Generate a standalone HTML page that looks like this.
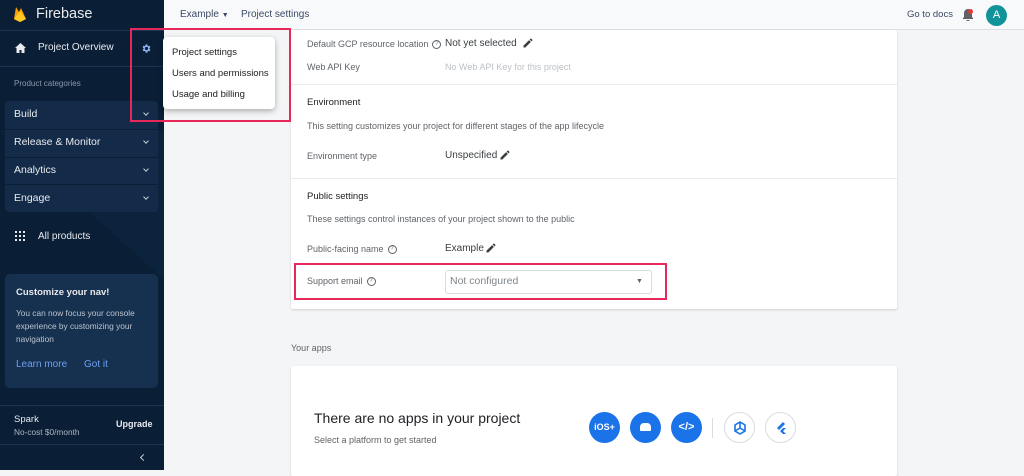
<!DOCTYPE html>
<html><head><meta charset="utf-8"><style>
*{box-sizing:border-box;margin:0;padding:0}
body{width:1024px;height:470px;overflow:hidden;background:#f4f5f6;font-family:"Liberation Sans",Roboto,sans-serif;position:relative;color:#3c4043}
.abs{position:absolute}
#side{left:0;top:0;width:164px;height:470px;background:#0a1f36;color:#e8eaed;overflow:hidden}
.t{position:absolute;white-space:nowrap}
.grp{left:5px;top:101px;width:153px;height:111px;background:#132b49;border-radius:4px}
.chev{position:absolute;width:4px;height:4px;border-right:1.3px solid #c5cbd3;border-bottom:1.3px solid #c5cbd3;transform:rotate(45deg)}
#top{left:164px;top:0;width:860px;height:30px;background:#f8f9fa;border-bottom:1px solid #e0e0e0}
.card{background:#fff;box-shadow:0 1px 2px rgba(0,0,0,.15);border-radius:2px}
.lbl{font-size:9px;color:#5f6368}
.val{font-size:10px;color:#3c4043}
.hr{position:absolute;height:1px;background:#e8eaed}
.circ{position:absolute;width:31px;height:31px;border-radius:50%;background:#1a73e8;color:#fff;font-size:9px;font-weight:bold;text-align:center;line-height:31px}
.circo{position:absolute;width:31px;height:31px;border-radius:50%;border:1px solid #dadce0;background:#fff}
.q{display:inline-block;width:9px;height:9px;border:1px solid #5f6368;border-radius:50%;font-size:6px;line-height:7px;text-align:center;vertical-align:middle;margin-left:4px}
</style></head><body>
<div id="side" class="abs">
<svg class="abs" style="left:0;top:130px" width="164" height="160"><path d="M0 0L164 150V0z" fill="#0d2540" opacity=".7"/></svg>
<svg class="abs" style="left:13px;top:5px" width="14" height="18" viewBox="0 0 14 18"><path d="M1 14L3 2l3 5 2-4 5 11-6 3z" fill="#ffa000"/><path d="M1 14l6-8 6 8-6 3z" fill="#ffca28"/></svg>
<div class="t" style="left:36px;top:6px;font-size:14.5px;color:#e8eaed">Firebase</div>
<div class="abs" style="left:0;top:30px;width:164px;height:1px;background:#1c3352"></div>
<svg class="abs" style="left:15px;top:43px" width="11" height="10" viewBox="0 0 11 10"><path d="M5.5 0L0 5h1.5v5h3V7h2v3h3V5H11z" fill="#e8eaed"/></svg>
<div class="t" style="left:38px;top:42px;font-size:10px">Project Overview</div>
<svg class="abs" style="left:141px;top:43px" width="11" height="11" viewBox="0 0 24 24"><path fill="#8ab4f8" d="M19.4 13a7.5 7.5 0 000-2l2.1-1.6-2-3.5-2.5 1a7 7 0 00-1.7-1L15 3h-4l-.4 2.7a7 7 0 00-1.7 1l-2.5-1-2 3.5L6.6 11a7.5 7.5 0 000 2l-2.1 1.6 2 3.5 2.5-1a7 7 0 001.7 1L11 21h4l.4-2.7a7 7 0 001.7-1l2.5 1 2-3.5zM13 15.5a3.5 3.5 0 110-7 3.5 3.5 0 010 7z" transform="translate(-1 0)"/></svg>
<div class="abs" style="left:0;top:66px;width:164px;height:1px;background:#1c3352"></div>
<div class="t" style="left:14px;top:79px;font-size:8px;color:#8a97a8">Product categories</div>
<div class="abs grp"></div>
<div class="hr" style="left:5px;top:129px;width:153px;background:#0a1f36"></div>
<div class="hr" style="left:5px;top:157px;width:153px;background:#0a1f36"></div>
<div class="hr" style="left:5px;top:184px;width:153px;background:#0a1f36"></div>
<div class="t" style="left:14px;top:108px;font-size:10.5px">Build</div>
<div class="t" style="left:14px;top:136px;font-size:10.5px">Release &amp; Monitor</div>
<div class="t" style="left:14px;top:164px;font-size:10.5px">Analytics</div>
<div class="t" style="left:14px;top:192px;font-size:10.5px">Engage</div>
<div class="chev" style="left:144px;top:111px"></div>
<div class="chev" style="left:144px;top:139px"></div>
<div class="chev" style="left:144px;top:167px"></div>
<div class="chev" style="left:144px;top:195px"></div>
<svg class="abs" style="left:15px;top:231px" width="10" height="10" viewBox="0 0 10 10" fill="#e8eaed"><rect x="0" y="0" width="2" height="2"/><rect x="4" y="0" width="2" height="2"/><rect x="8" y="0" width="2" height="2"/><rect x="0" y="4" width="2" height="2"/><rect x="4" y="4" width="2" height="2"/><rect x="8" y="4" width="2" height="2"/><rect x="0" y="8" width="2" height="2"/><rect x="4" y="8" width="2" height="2"/><rect x="8" y="8" width="2" height="2"/></svg>
<div class="t" style="left:38px;top:231px;font-size:10px">All products</div>
<div class="abs" style="left:5px;top:274px;width:153px;height:114px;background:#16304f;border-radius:5px"></div>
<div class="t" style="left:16px;top:287px;font-size:9.5px;font-weight:bold">Customize your nav!</div>
<div class="t" style="left:16px;top:307px;font-size:8.3px;line-height:13px;color:#bcc4cf;white-space:normal;width:135px">You can now focus your console experience by customizing your navigation</div>
<div class="t" style="left:16px;top:359px;font-size:10px;color:#6ea0f0">Learn more</div>
<div class="t" style="left:84px;top:359px;font-size:10px;color:#6ea0f0">Got it</div>
<div class="abs" style="left:0;top:405px;width:164px;height:1px;background:#1c3352"></div>
<div class="t" style="left:14px;top:414px;font-size:9.5px">Spark</div>
<div class="t" style="left:14px;top:427px;font-size:8.3px;color:#aab4c0">No-cost $0/month</div>
<div class="t" style="left:116px;top:419px;font-size:9px;font-weight:bold">Upgrade</div>
<div class="abs" style="left:0;top:444px;width:164px;height:1px;background:#1c3352"></div>
<div class="chev" style="left:141px;top:455px;width:5px;height:5px;transform:rotate(135deg)"></div>
</div>
<div id="top" class="abs">
<div class="t" style="left:16px;top:9px;font-size:10px;color:#3c4a66">Example <span style="font-size:7px">▼</span></div>
<div class="t" style="left:77px;top:9px;font-size:10px;color:#3c4a66">Project settings</div>
<div class="t" style="left:743px;top:9px;font-size:9.5px;color:#3c4a66">Go to docs</div>
<svg class="abs" style="left:798px;top:8px" width="12" height="13" viewBox="0 0 12 13"><path d="M6 1a4 4 0 00-4 4v4L1 10v1h10v-1L10 9V5a4 4 0 00-4-4zM4.5 12h3a1.5 1.5 0 01-3 0z" fill="#5f6368"/><circle cx="8.5" cy="3.5" r="2.5" fill="#e53935"/></svg>
<div class="abs" style="left:822px;top:5px;width:21px;height:21px;border-radius:50%;background:#12939a;color:#fff;font-size:11px;text-align:center;line-height:21px">A</div>
</div>
<div class="abs card" style="left:291px;top:30px;width:606px;height:279px">
<div class="t lbl" style="left:16px;top:9px">Default GCP resource location<span class="q">?</span></div>
<div class="t val" style="left:154px;top:8px">Not yet selected</div>
<svg class="abs" style="left:231px;top:7px" width="12" height="12" viewBox="0 0 24 24"><path d="M3 17.3V21h3.7L17.8 9.9l-3.7-3.7zM20.7 7a1 1 0 000-1.4l-2.3-2.3a1 1 0 00-1.4 0l-1.8 1.8 3.7 3.7z" fill="#3c4043"/></svg>
<div class="t lbl" style="left:16px;top:32px">Web API Key</div>
<div class="t" style="left:154px;top:32px;font-size:9px;color:#bdc1c6">No Web API Key for this project</div>
<div class="hr" style="left:0;top:54px;width:606px"></div>
<div class="t" style="left:16px;top:67px;font-size:9.5px;color:#202124">Environment</div>
<div class="t lbl" style="left:16px;top:91px">This setting customizes your project for different stages of the app lifecycle</div>
<div class="t lbl" style="left:16px;top:121px">Environment type</div>
<div class="t val" style="left:154px;top:120px">Unspecified</div>
<svg class="abs" style="left:208px;top:119px" width="12" height="12" viewBox="0 0 24 24"><path d="M3 17.3V21h3.7L17.8 9.9l-3.7-3.7zM20.7 7a1 1 0 000-1.4l-2.3-2.3a1 1 0 00-1.4 0l-1.8 1.8 3.7 3.7z" fill="#3c4043"/></svg>
<div class="hr" style="left:0;top:148px;width:606px"></div>
<div class="t" style="left:16px;top:161px;font-size:9.5px;color:#202124">Public settings</div>
<div class="t lbl" style="left:16px;top:184px">These settings control instances of your project shown to the public</div>
<div class="t lbl" style="left:16px;top:214px">Public-facing name<span class="q">?</span></div>
<div class="t val" style="left:154px;top:213px">Example</div>
<svg class="abs" style="left:194px;top:212px" width="12" height="12" viewBox="0 0 24 24"><path d="M3 17.3V21h3.7L17.8 9.9l-3.7-3.7zM20.7 7a1 1 0 000-1.4l-2.3-2.3a1 1 0 00-1.4 0l-1.8 1.8 3.7 3.7z" fill="#3c4043"/></svg>
<div class="t lbl" style="left:16px;top:246px">Support email<span class="q">?</span></div>
<div class="abs" style="left:154px;top:240px;width:207px;height:24px;border:1px solid #dadce0;border-radius:3px"></div>
<div class="t" style="left:159px;top:245px;font-size:10.5px;color:#80868b">Not configured</div>
<div class="t" style="left:345px;top:248px;font-size:7px;color:#5f6368">▼</div>
</div>
<div class="t" style="left:291px;top:343px;font-size:9px;color:#5f6368">Your apps</div>
<div class="abs card" style="left:291px;top:366px;width:606px;height:110px">
<div class="t" style="left:23px;top:44px;font-size:14px;color:#202124">There are no apps in your project</div>
<div class="t lbl" style="left:23px;top:69px">Select a platform to get started</div>
<div class="circ" style="left:298px;top:46px">iOS+</div>
<div class="circ" style="left:339px;top:46px"><span style="display:inline-block;width:11px;height:8px;background:#fff;border-radius:4px 4px 1px 1px;margin-top:11px"></span></div>
<div class="circ" style="left:380px;top:46px;font-size:11px">&lt;/&gt;</div>
<div class="abs" style="left:421px;top:52px;width:1px;height:20px;background:#dadce0"></div>
<div class="circo" style="left:433px;top:46px"><svg style="margin:8px" width="14" height="14" viewBox="0 0 14 14"><path d="M7 1l5 3v6l-5 3-5-3V4z M7 1v6M2 10l5-3 5 3" fill="none" stroke="#1a73e8" stroke-width="1.6"/></svg></div>
<div class="circo" style="left:474px;top:46px"><svg style="margin:8px" width="14" height="14" viewBox="0 0 14 14"><path d="M9 1L3 7l2 2 6-6zM9 7L6 10l3 3h3L9 10l3-3z" fill="#1a73e8"/></svg></div>
</div>
<div class="abs" style="left:163px;top:37px;width:112px;height:72px;background:#fff;border-radius:4px;box-shadow:0 2px 6px rgba(0,0,0,.3)"></div>
<div class="t" style="left:172px;top:47px;font-size:9.5px;color:#202124">Project settings</div>
<div class="t" style="left:172px;top:68px;font-size:9.5px;color:#202124">Users and permissions</div>
<div class="t" style="left:172px;top:89px;font-size:9.5px;color:#202124">Usage and billing</div>
<div class="abs" style="left:130px;top:28px;width:161px;height:94px;border:2px solid #e8285a"></div>
<div class="abs" style="left:294px;top:263px;width:373px;height:37px;border:2px solid #e8285a"></div>
</body></html>
